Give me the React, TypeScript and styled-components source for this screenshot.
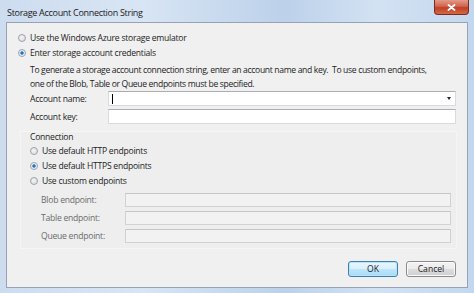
import styled, { createGlobalStyle } from 'styled-components';

const Global = createGlobalStyle`
  html, body {
    margin: 0;
    padding: 0;
    overflow: hidden;
  }
  body {
    font-family: 'Open Sans', 'Noto Sans', sans-serif;
    font-size: 8.6px;
    letter-spacing: -0.25px;
    color: #1c1c1c;
  }
`;

const Window = styled.div`
  width: 474px;
  height: 293px;
  display: flex;
  flex-direction: column;
  box-sizing: border-box;
  padding: 0 6px 5px;
  background: linear-gradient(90deg, #cddcef 0%, #d8e5f4 30%, #bcd1ea 60%, #d3e2f3 80%, #c3d7ee 100%);
`;

const TitleBar = styled.div`
  flex-shrink: 0;
  height: 22px;
  display: flex;
  align-items: flex-start;
  justify-content: space-between;
`;

const Title = styled.div`
  padding: 6px 0 0 1px;
  font-size: 9px;
  letter-spacing: -0.3px;
  color: #1a1a1a;
`;

const CloseButton = styled.div`
  width: 35px;
  height: 15px;
  margin-right: -1px;
  box-sizing: border-box;
  border: 1px solid #7a2b22;
  border-top: none;
  border-radius: 0 0 4px 4px;
  background: linear-gradient(180deg, #e39a88 0%, #d0644f 45%, #bf3f29 55%, #d56842 100%);
  display: flex;
  align-items: center;
  justify-content: center;
`;

const Client = styled.div`
  flex: 1;
  min-height: 0;
  display: flex;
  flex-direction: column;
  box-sizing: border-box;
  border: 1px solid #97a3b2;
  background: #f0f0f0;
  padding: 7px 11px 0 11px;
`;

const RadioRow = styled.label`
  display: flex;
  align-items: center;
  gap: 4px;
  height: 15px;
`;

const RadioDot = styled.span<{ $checked?: boolean }>`
  flex-shrink: 0;
  width: 8px;
  height: 8px;
  border-radius: 50%;
  box-sizing: border-box;
  border: 1px solid #9ba2aa;
  background: ${p =>
    p.$checked
      ? 'radial-gradient(circle, #1f5fa8 0%, #3a8bd8 35%, #e4eaf1 45%, #f7f7f7 100%)'
      : 'radial-gradient(circle at 40% 40%, #f4f4f4 0%, #d7d9dc 100%)'};
`;

const Indent = styled.div`
  padding-left: 12px;
`;

const Info = styled.p`
  margin: 3px 0 0;
  line-height: 14px;
  letter-spacing: -0.35px;
  white-space: nowrap;
`;

const FieldGrid = styled.div<{ $label: number; $field: number; $gap: number }>`
  display: grid;
  grid-template-columns: ${p => `${p.$label}px ${p.$field}px`};
  row-gap: ${p => p.$gap}px;
  align-items: center;
`;

const TextBox = styled.div<{ $disabled?: boolean }>`
  height: ${p => (p.$disabled ? 14 : 15)}px;
  box-sizing: border-box;
  border: 1px solid ${p => (p.$disabled ? '#d2d2d2' : '#d6dbe1')};
  border-top-color: ${p => (p.$disabled ? '#c6c6c6' : '#abadb3')};
  background: ${p => (p.$disabled ? '#f2f2f2' : '#ffffff')};
  display: flex;
  align-items: center;
  justify-content: space-between;
  padding: 0 4px 0 3px;
`;

const Caret = styled.span`
  width: 1px;
  height: 10px;
  background: #000;
`;

const DropArrow = styled.span`
  width: 0;
  height: 0;
  border-left: 2.5px solid transparent;
  border-right: 2.5px solid transparent;
  border-top: 3px solid #222;
`;

const GroupBox = styled.div`
  flex-shrink: 0;
  margin: 7px 0 0 2px;
  width: 437px;
  height: 118px;
  box-sizing: border-box;
  border: 1px solid #f5f5f5;
  background: #eeeeee;
  padding: 0 0 0 9px;
`;

const GroupTitle = styled.div`
  height: 10px;
  line-height: 10px;
  margin-bottom: 1px;
`;

const Endpoints = styled(FieldGrid)`
  margin: 5px 0 0 11px;
`;

const DimLabel = styled.span`
  color: #6b6b6b;
`;

const Footer = styled.div`
  display: flex;
  justify-content: flex-end;
  gap: 8px;
  margin-top: 12px;
`;

const Button = styled.button<{ $focused?: boolean }>`
  width: 50px;
  height: 16px;
  padding: 0;
  font: inherit;
  color: #1a1a1a;
  border-radius: 3px;
  border: 1px solid ${p => (p.$focused ? '#3c7fb1' : '#8a8a8a')};
  box-shadow: inset 0 0 0 1px ${p => (p.$focused ? '#b9e3f7' : '#fbfbfb')};
  background: ${p =>
    p.$focused
      ? 'linear-gradient(180deg, #eaf6fd 0%, #d9f0fc 50%, #bee6fd 51%, #a7d9f5 100%)'
      : 'linear-gradient(180deg, #f3f3f3 0%, #ebebeb 50%, #dddddd 51%, #cfcfcf 100%)'};
`;

const Radio = ({ label, checked }: { label: string; checked?: boolean }) => (
  <RadioRow>
    <RadioDot $checked={checked} />
    <span>{label}</span>
  </RadioRow>
);

export default function App() {
  return (
    <>
      <Global />
      <Window>
        <TitleBar>
          <Title>Storage Account Connection String</Title>
          <CloseButton>
            <svg width="9" height="7" viewBox="0 0 9 7">
              <path d="M1.5 1 L7.5 6 M7.5 1 L1.5 6" stroke="#fff" strokeWidth="1.8" strokeLinecap="round" />
            </svg>
          </CloseButton>
        </TitleBar>
        <Client>
          <Radio label="Use the Windows Azure storage emulator" />
          <Radio label="Enter storage account credentials" checked />
          <Indent>
            <Info>
              To generate a storage account connection string, enter an account name and key.&nbsp; To use
              custom endpoints,
              <br />
              one of the Blob, Table or Queue endpoints must be specified.
            </Info>
            <FieldGrid $label={78} $field={348} $gap={3}>
              <span>Account name:</span>
              <TextBox>
                <Caret />
                <DropArrow />
              </TextBox>
              <span>Account key:</span>
              <TextBox />
            </FieldGrid>
          </Indent>
          <GroupBox>
            <GroupTitle>Connection</GroupTitle>
            <Radio label="Use default HTTP endpoints" />
            <Radio label="Use default HTTPS endpoints" checked />
            <Radio label="Use custom endpoints" />
            <Endpoints $label={84} $field={326} $gap={4}>
              <DimLabel>Blob endpoint:</DimLabel>
              <TextBox $disabled />
              <DimLabel>Table endpoint:</DimLabel>
              <TextBox $disabled />
              <DimLabel>Queue endpoint:</DimLabel>
              <TextBox $disabled />
            </Endpoints>
          </GroupBox>
          <Footer>
            <Button $focused>OK</Button>
            <Button>Cancel</Button>
          </Footer>
        </Client>
      </Window>
    </>
  );
}
